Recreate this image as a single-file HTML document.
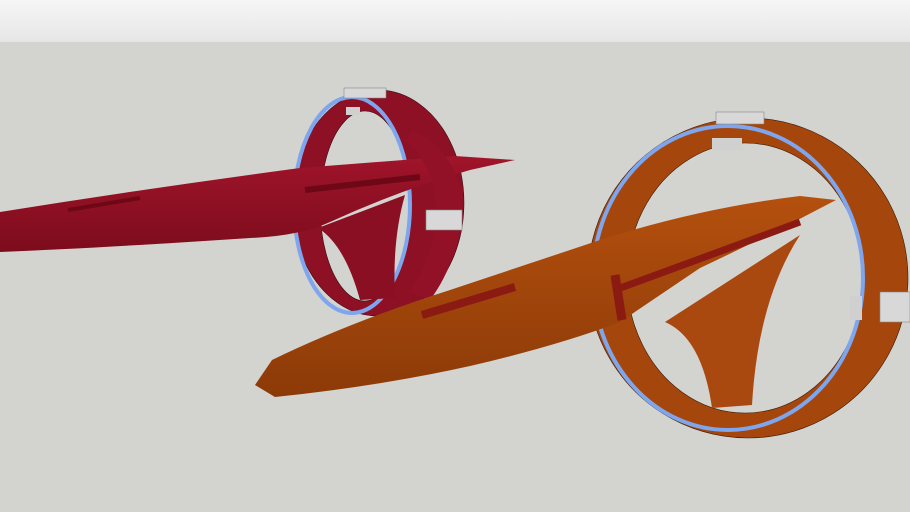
<!DOCTYPE html>
<html><head><style>
html,body{margin:0;padding:0;width:910px;height:512px;overflow:hidden;background:#d3d3cf}
</style></head><body>
<svg width="910" height="512" viewBox="0 0 910 512" xmlns="http://www.w3.org/2000/svg">
<defs>
<linearGradient id="sky" x1="0" y1="0" x2="0" y2="1"><stop offset="0" stop-color="#f6f6f6"/><stop offset="1" stop-color="#e6e6e6"/></linearGradient>
<linearGradient id="rb" x1="0" y1="0" x2="0" y2="1"><stop offset="0" stop-color="#a0142a"/><stop offset="1" stop-color="#7c0c1c"/></linearGradient>
<linearGradient id="ob" x1="0" y1="0" x2="0" y2="1"><stop offset="0" stop-color="#b4500e"/><stop offset="1" stop-color="#8c3a08"/></linearGradient>
</defs>
<rect x="0" y="0" width="910" height="42" fill="url(#sky)"/>
<rect x="0" y="42" width="910" height="470" fill="#d3d3cf"/>

<!-- red ring -->
<path fill-rule="evenodd" fill="#8e1024" stroke="#3a0a10" stroke-width="0.6" d="M378,90 A86,113 0 1,1 377.9,90 Z M365,111 A45,95 0 1,0 365.1,111 Z"/>
<ellipse cx="352" cy="205" rx="58" ry="108" fill="none" stroke="#7ea6ee" stroke-width="4"/>
<!-- red fin -->
<path d="M318,228 Q345,245 360,300 L395,298 Q392,240 405,195 Z" fill="#8a0f22"/>
<!-- red rocket -->
<path d="M0,212 Q150,188 300,168 L455,156 L515,160 L470,170 Q400,190 330,222 Q300,236 250,238 Q100,248 0,252 Z" fill="url(#rb)"/>
<path d="M305,190 L420,177" stroke="#6e0816" stroke-width="6"/>
<path d="M68,210 L140,198" stroke="#6e0816" stroke-width="4"/>
<!-- red ring front band -->
<path d="M412,130 Q455,150 463,200 Q460,260 430,300 L410,292 Q438,250 436,200 Q430,160 405,140 Z" fill="#931126"/>
<rect x="426" y="210" width="36" height="20" fill="#d8d8d8" stroke="#888" stroke-width="0.6"/>
<rect x="344" y="88" width="42" height="10" fill="#d8d8d8" stroke="#888" stroke-width="0.6"/>
<rect x="346" y="107" width="14" height="8" fill="#d0d0d0"/>

<!-- orange ring -->
<path fill-rule="evenodd" fill="#a5470d" stroke="#3a1a05" stroke-width="0.6" d="M748,118 A160,160 0 1,1 747.9,118 Z M745,143 A118,135 0 1,0 745.1,143 Z"/>
<ellipse cx="728" cy="278" rx="135" ry="152" fill="none" stroke="#7ea6ee" stroke-width="4"/>
<!-- orange fin -->
<path d="M665,322 Q702,338 712,408 L752,405 Q758,300 800,235 Z" fill="#a9480f"/>
<!-- orange rocket -->
<path d="M255,385 L272,360 Q350,322 450,290 L600,240 Q700,208 800,196 L836,200 Q770,235 700,268 L620,322 Q560,345 470,366 Q380,386 275,397 Z" fill="url(#ob)"/>
<path d="M422,315 L515,287" stroke="#8a1a12" stroke-width="8"/>
<path d="M615,290 L800,222" stroke="#8a1a12" stroke-width="7"/>
<path d="M615,275 L622,320" stroke="#8a1a12" stroke-width="9"/>
<rect x="880" y="292" width="30" height="30" fill="#d8d8d8" stroke="#888" stroke-width="0.6"/>
<rect x="850" y="296" width="12" height="24" fill="#d0d0d0"/>
<rect x="716" y="112" width="48" height="12" fill="#d8d8d8" stroke="#888" stroke-width="0.6"/>
<rect x="712" y="138" width="30" height="12" fill="#d0d0d0"/>
</svg>
</body></html>
